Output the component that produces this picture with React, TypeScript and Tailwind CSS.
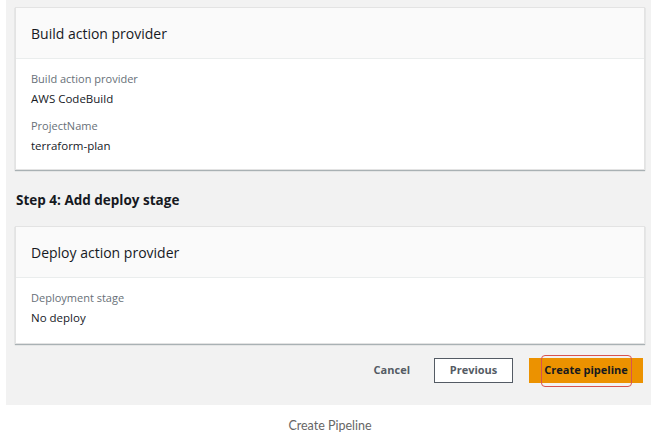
import React from "react";

const font = { fontFamily: '"Open Sans", "Noto Sans", Arial, sans-serif' };

function Field({ label, value, first }: { label: string; value: string; first?: boolean }) {
  return (
    <div className={first ? "" : "mt-[9px]"}>
      <div className="text-[11px] leading-[18px] text-[#687078]">{label}</div>
      <div className="mt-[2px] text-[11.5px] leading-[18px] font-medium text-[#16191f]">{value}</div>
    </div>
  );
}

function Card({ title, children, bodyClass }: { title: string; children: React.ReactNode; bodyClass: string }) {
  return (
    <div className="bg-white border border-[#e3e3e3] shadow-[0_1px_1px_0_rgba(0,28,36,0.3)]">
      <div className="h-[51px] flex items-center px-[15px] bg-[#fafafa] border-b border-[#eaeded]">
        <span className="text-[14px] text-[#16191f]">{title}</span>
      </div>
      <div className={bodyClass}>{children}</div>
    </div>
  );
}

export default function App() {
  return (
    <div className="w-[660px] h-[448px] bg-white overflow-hidden" style={font}>
      <div className="ml-[6px] w-[645px] h-[405px] bg-[#f2f2f2] pl-[9px] pr-[6px] pt-[7px] flex flex-col">
        <Card title="Build action provider" bodyClass="px-[15px] pt-[11px] pb-[14px]">
          <Field label="Build action provider" value="AWS CodeBuild" first />
          <Field label="ProjectName" value="terraform-plan" />
        </Card>
        <div className="h-[56px] flex items-center pt-[5px] pl-[1px]">
          <span className="text-[13.5px] font-bold text-[#16191f]">Step 4: Add deploy stage</span>
        </div>
        <Card title="Deploy action provider" bodyClass="px-[15px] pt-[11px] pb-[16px]">
          <Field label="Deployment stage" value="No deploy" first />
        </Card>
        <div className="mt-[14px] mr-[2px] flex items-center justify-end">
          <span className="text-[11px] font-bold text-[#545b64] mr-[24px]">Cancel</span>
          <div className="w-[79px] h-[25px] border border-[#545b64] bg-white flex items-center justify-center text-[11px] font-bold text-[#545b64]">
            Previous
          </div>
          <div className="relative ml-[16px] w-[114px] h-[25px] bg-[#ec9200] flex items-center justify-center text-[11px] font-bold text-[#16191f]">
            Create pipeline
            <div className="absolute left-[12px] top-[-3px] w-[91px] h-[32px] rounded-[4px] border-[1.5px] border-[#d9534f]" />
          </div>
        </div>
      </div>
      <div className="h-[43px] flex items-center justify-center">
        <span className="text-[12.5px] text-[#666666]" style={{ fontFamily: 'Lato, "Open Sans", sans-serif' }}>
          Create Pipeline
        </span>
      </div>
    </div>
  );
}
